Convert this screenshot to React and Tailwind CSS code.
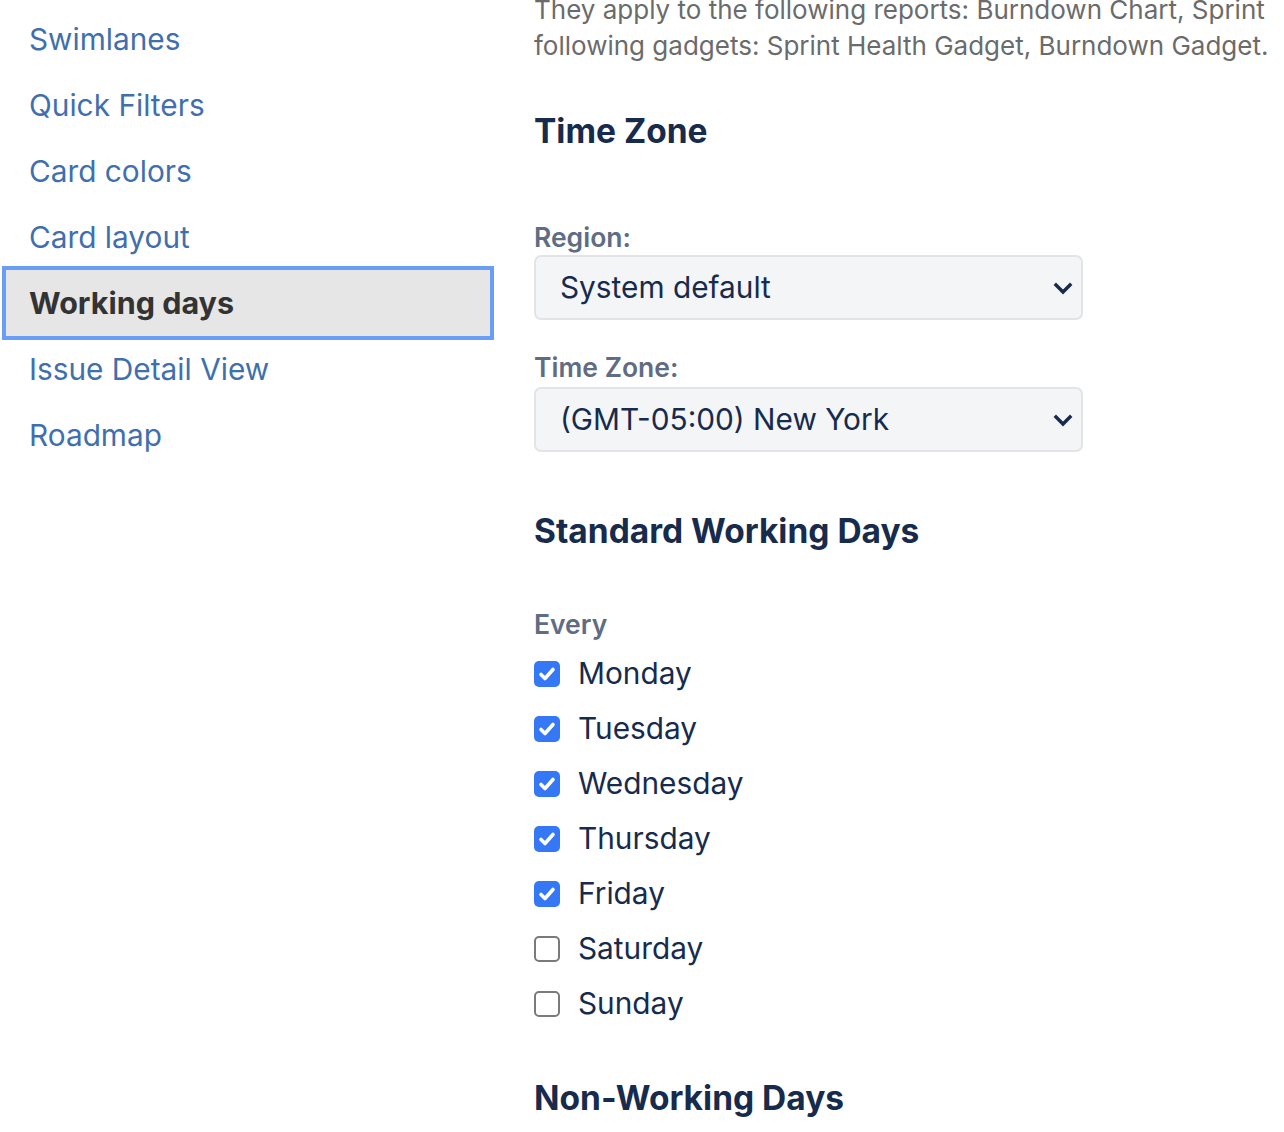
import { useState } from 'react';

const navItems = [
  'Swimlanes',
  'Quick Filters',
  'Card colors',
  'Card layout',
  'Working days',
  'Issue Detail View',
  'Roadmap',
];

const initialDays = [
  { name: 'Monday', checked: true },
  { name: 'Tuesday', checked: true },
  { name: 'Wednesday', checked: true },
  { name: 'Thursday', checked: true },
  { name: 'Friday', checked: true },
  { name: 'Saturday', checked: false },
  { name: 'Sunday', checked: false },
];

const Chevron = () => (
  <svg className="w-[20px] h-[14px]" viewBox="0 0 20 14" fill="none">
    <path d="M3 4l7 7 7-7" stroke="#172b4d" strokeWidth={3.4} strokeLinecap="square" />
  </svg>
);

const SelectBox = ({ value }) => (
  <div className="flex items-center justify-between w-[549px] h-[65px] rounded-[7px] border-2 border-[#e2e4e8] bg-[#f4f5f7] pl-[24px] pr-[8px]">
    <span className="text-[29.8px] leading-none text-[#172b4d]">{value}</span>
    <Chevron />
  </div>
);

const Checkbox = ({ checked, onChange }) => (
  <button
    type="button"
    onClick={onChange}
    className={
      checked
        ? 'flex items-center justify-center w-[26px] h-[26px] rounded-[5px] bg-[#3478f6]'
        : 'flex items-center justify-center w-[26px] h-[26px] rounded-[5px] border-2 border-[#7a7a7a] bg-white'
    }
  >
    {checked && (
      <svg className="w-[20px] h-[20px]" viewBox="0 0 20 20" fill="none">
        <path d="M4 10.5l4 4 8-9" stroke="white" strokeWidth={3.6} strokeLinecap="round" strokeLinejoin="round" />
      </svg>
    )}
  </button>
);

export default function App() {
  const [days, setDays] = useState(initialDays);

  const toggle = (i) =>
    setDays((prev) => prev.map((d, idx) => (idx === i ? { ...d, checked: !d.checked } : d)));

  return (
    <div className="w-[1284px] h-[1132px] overflow-hidden bg-white flex font-['Inter','Noto_Sans',sans-serif]">
      {/* Sidebar */}
      <nav className="w-[534px] shrink-0 pt-[6px] pl-[6px]">
        <ul className="w-[484px]">
          {navItems.map((item) =>
            item === 'Working days' ? (
              <li
                key={item}
                className="h-[66px] flex items-center pl-[23px] bg-[#e6e6e6] outline-4 outline-[#6a9df6] text-[30.5px] font-bold text-[#333333]"
              >
                {item}
              </li>
            ) : (
              <li key={item} className="h-[66px] flex items-center pl-[23px] text-[29.8px] text-[#3f70ad]">
                {item}
              </li>
            )
          )}
        </ul>
      </nav>

      {/* Content */}
      <main className="flex-1 min-w-0 mt-[-8px]">
        <div className="text-[26px] leading-[36px] text-[#6b6b6b] whitespace-nowrap">
          <p>They apply to the following reports: Burndown Chart, Sprint</p>
          <p>following gadgets: Sprint Health Gadget, Burndown Gadget.</p>
        </div>

        <h2 className="mt-[47px] text-[33.5px] leading-[40px] font-bold text-[#172b4d]">Time Zone</h2>

        <label className="block mt-[70px] text-[26.5px] leading-[32px] font-semibold text-[#5e6c84]">Region:</label>
        <div className="mt-[2px]">
          <SelectBox value="System default" />
        </div>

        <label className="block mt-[31px] text-[26.5px] leading-[32px] font-semibold text-[#5e6c84]">Time Zone:</label>
        <div className="mt-[4px]">
          <SelectBox value="(GMT-05:00) New York" />
        </div>

        <h2 className="mt-[59px] text-[33.5px] leading-[40px] font-bold text-[#172b4d]">Standard Working Days</h2>

        <div className="mt-[57px] text-[26.5px] leading-[32px] font-semibold text-[#5e6c84]">Every</div>
        <ul className="mt-[6px]">
          {days.map((d, i) => (
            <li key={d.name} className="h-[55px] flex items-center gap-[18px]">
              <Checkbox checked={d.checked} onChange={() => toggle(i)} />
              <span className="text-[29.8px] text-[#172b4d]">{d.name}</span>
            </li>
          ))}
        </ul>

        <h2 className="mt-[47px] text-[33.5px] leading-[40px] font-bold text-[#172b4d]">Non-Working Days</h2>
      </main>
    </div>
  );
}
